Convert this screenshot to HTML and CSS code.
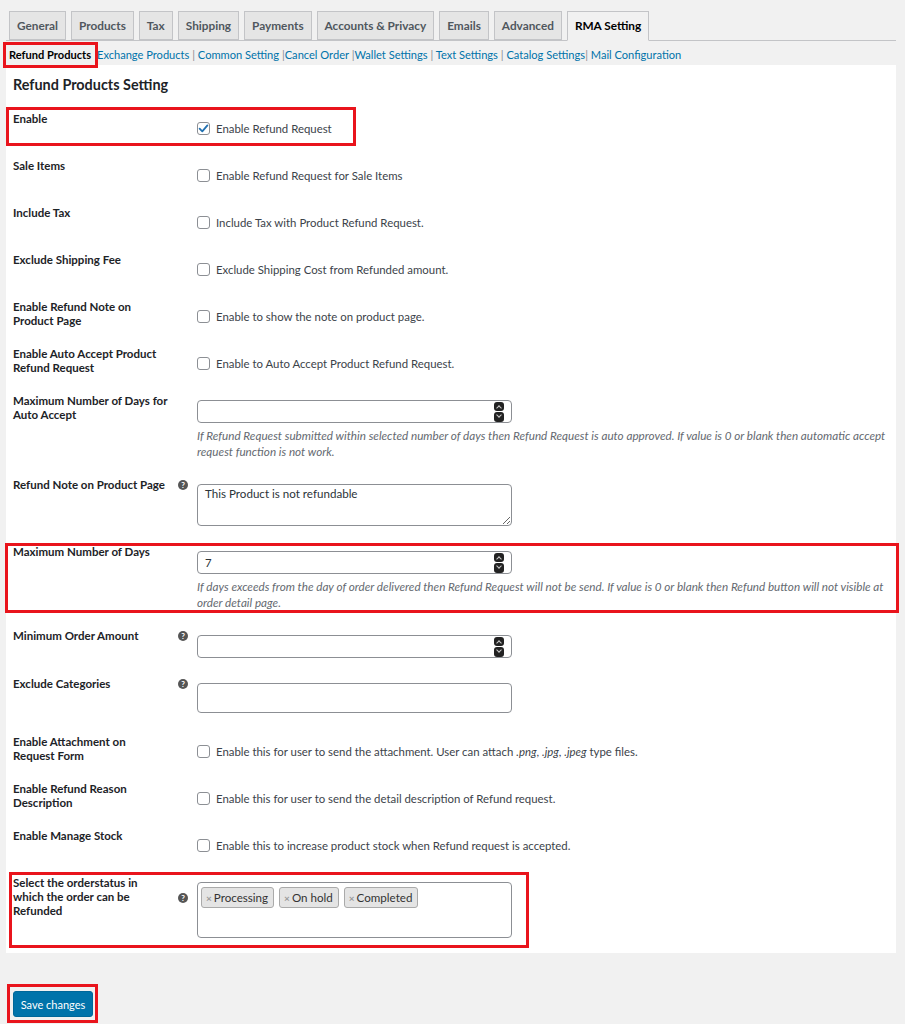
FILE: index.html
```html
<!DOCTYPE html>
<html lang="en">
<head>
  <meta charset="UTF-8" />
  <title>RMA Setting – Refund Products</title>
  <link rel="stylesheet" href="styles.css">
</head>
<body>
<div class="wrap">

  <!-- Tabs -->
  <nav class="nav-tabs">
    <a class="tab">General</a>
    <a class="tab">Products</a>
    <a class="tab">Tax</a>
    <a class="tab">Shipping</a>
    <a class="tab">Payments</a>
    <a class="tab">Accounts &amp; Privacy</a>
    <a class="tab">Emails</a>
    <a class="tab">Advanced</a>
    <a class="tab active">RMA Setting</a>
  </nav>

  <!-- Sub navigation -->
  <div class="subnav">
    <a class="current">Refund Products</a> <a>Exchange Products</a><span class="sep"> | </span><a>Common Setting</a><span class="sep"> |</span><a>Cancel Order</a><span class="sep"> |</span><a>Wallet Settings</a><span class="sep"> | </span><a>Text Settings</a><span class="sep"> | </span><a>Catalog Settings</a><span class="sep">| </span><a>Mail Configuration</a>
  </div>

  <!-- Settings panel -->
  <div class="panel">
    <h2>Refund Products Setting</h2>

    <div class="row">
      <div class="label">Enable</div><div class="help"></div>
      <div class="field"><label class="check"><span class="box checked"><svg viewBox="0 0 13 13" width="13" height="13"><path d="M2.6 6.6 L5.3 9.3 L10.4 3.4" fill="none" stroke="#2271b1" stroke-width="1.8" stroke-linecap="round" stroke-linejoin="round"/></svg></span>Enable Refund Request</label></div>
    </div>

    <div class="row">
      <div class="label">Sale Items</div><div class="help"></div>
      <div class="field"><label class="check"><span class="box"></span>Enable Refund Request for Sale Items</label></div>
    </div>

    <div class="row">
      <div class="label">Include Tax</div><div class="help"></div>
      <div class="field"><label class="check"><span class="box"></span>Include Tax with Product Refund Request.</label></div>
    </div>

    <div class="row">
      <div class="label">Exclude Shipping Fee</div><div class="help"></div>
      <div class="field"><label class="check"><span class="box"></span>Exclude Shipping Cost from Refunded amount.</label></div>
    </div>

    <div class="row">
      <div class="label">Enable Refund Note on Product Page</div><div class="help"></div>
      <div class="field"><label class="check"><span class="box"></span>Enable to show the note on product page.</label></div>
    </div>

    <div class="row">
      <div class="label">Enable Auto Accept Product Refund Request</div><div class="help"></div>
      <div class="field"><label class="check"><span class="box"></span>Enable to Auto Accept Product Refund Request.</label></div>
    </div>

    <div class="row">
      <div class="label">Maximum Number of Days for Auto Accept</div><div class="help"></div>
      <div class="field">
        <div class="input num"><span class="spin"><i></i><i class="down"></i></span></div>
        <p class="desc">If Refund Request submitted within selected number of days then Refund Request is auto approved. If value is 0 or blank then automatic accept request function is not work.</p>
      </div>
    </div>

    <div class="row">
      <div class="label">Refund Note on Product Page</div><div class="help"><span class="q">?</span></div>
      <div class="field"><textarea class="note">This Product is not refundable</textarea></div>
    </div>

    <div class="row">
      <div class="label">Maximum Number of Days</div><div class="help"></div>
      <div class="field">
        <div class="input num"><span class="val">7</span><span class="spin"><i></i><i class="down"></i></span></div>
        <p class="desc">If days exceeds from the day of order delivered then Refund Request will not be send. If value is 0 or blank then Refund button will not visible at order detail page.</p>
      </div>
    </div>

    <div class="row">
      <div class="label">Minimum Order Amount</div><div class="help"><span class="q">?</span></div>
      <div class="field"><div class="input num"><span class="spin"><i></i><i class="down"></i></span></div></div>
    </div>

    <div class="row">
      <div class="label">Exclude Categories</div><div class="help"><span class="q">?</span></div>
      <div class="field"><div class="input tall"></div></div>
    </div>

    <div class="row">
      <div class="label">Enable Attachment on Request Form</div><div class="help"></div>
      <div class="field"><label class="check"><span class="box"></span>Enable this for user to send the attachment. User can attach&nbsp;<em>.png</em>,&nbsp;<em>.jpg</em>,&nbsp;<em>.jpeg</em>&nbsp;type files.</label></div>
    </div>

    <div class="row">
      <div class="label">Enable Refund Reason Description</div><div class="help"></div>
      <div class="field"><label class="check"><span class="box"></span>Enable this for user to send the detail description of Refund request.</label></div>
    </div>

    <div class="row">
      <div class="label">Enable Manage Stock</div><div class="help"></div>
      <div class="field"><label class="check"><span class="box"></span>Enable this to increase product stock when Refund request is accepted.</label></div>
    </div>

    <div class="row last">
      <div class="label">Select the orderstatus in which the order can be Refunded</div><div class="help mid"><span class="q">?</span></div>
      <div class="field">
        <div class="select">
          <span class="tag"><b>×</b>Processing</span>
          <span class="tag"><b>×</b>On hold</span>
          <span class="tag"><b>×</b>Completed</span>
        </div>
      </div>
    </div>
  </div>

  <button class="save">Save changes</button>
</div>

<!-- annotation boxes -->
<div class="mark m1"></div>
<div class="mark m2"></div>
<div class="mark m3"></div>
<div class="mark m4"></div>
<div class="mark m5"></div>
</body>
</html>
```

FILE: styles.css
```css
* { margin: 0; padding: 0; box-sizing: border-box; }
body { font-family: Lato, "Liberation Sans", sans-serif; font-size: 11.4px; background: #f1f1f1; color: #3c434a; }
a { color: #0073aa; text-decoration: none; }

.wrap { padding: 11px 9px 0 6px; }

/* tabs */
.nav-tabs { display: flex; gap: 5px; padding-left: 3px; border-bottom: 1px solid #c3c4c7; height: 30px; }
.tab { height: 29px; line-height: 27px; padding: 0 7px; border: 1px solid #c3c4c7; background: #e5e5e5; color: #50575e; font-weight: bold; font-size: 11.8px; }
.tab.active { background: #f1f1f1; color: #000; height: 30px; border-bottom-color: #f1f1f1; }

/* sub navigation */
.subnav { height: 24px; line-height: 27px; padding-left: 3px; font-size: 11.1px; white-space: nowrap; }
.subnav .current { color: #000; font-weight: bold; margin-right: 3px; }
.subnav .sep { color: #8c8f94; }

/* panel */
.panel { background: #fff; padding: 12px 7px 0; }
.panel h2 { font-size: 14.4px; line-height: 16px; color: #1d2327; margin-bottom: 12px; }

.row { display: grid; grid-template-columns: 164px 20px 1fr; }
.label { padding-top: 7px; line-height: 14px; font-weight: bold; font-size: 11.5px; color: #1d2327; padding-right: 8px; }
.help { padding-top: 9px; }
.help.mid { padding-top: 24px; }
.q { display: block; width: 10px; height: 10px; margin-left: 1px; border-radius: 50%; background: #555; color: #fff; font-size: 8px; font-weight: bold; line-height: 10px; text-align: center; }
.field { padding: 13px 0 12px; }

.check { display: flex; align-items: center; height: 20px; margin-bottom: 2px; color: #3c434a; }
.check em { font-style: italic; }
.box { width: 13px; height: 13px; border: 1px solid #8c8f94; border-radius: 3px; background: #fff; margin-right: 6px; flex: none; position: relative; }
.box svg { position: absolute; left: -1px; top: -1px; }

.input { width: 315px; height: 23px; border: 1px solid #8c8f94; border-radius: 4px; background: #fff; }
.input.tall { height: 30px; margin-bottom: 3px; }
.num { display: flex; align-items: center; justify-content: space-between; padding: 0 7px 0 7px; }
.val { color: #2c3338; }
.spin { margin-left: auto; width: 10px; height: 20px; display: flex; flex-direction: column; gap: 1px; }
.spin i { flex: 1; background: #222; border-radius: 3px; position: relative; }
.spin i::after { content: ""; position: absolute; left: 3px; top: 4px; width: 3px; height: 3px; border-left: 1px solid #ccc; border-top: 1px solid #ccc; transform: rotate(45deg); }
.spin i.down::after { top: 1px; transform: rotate(225deg); }

.desc { margin-top: 4px; line-height: 16px; font-style: italic; color: #646970; font-size: 11.7px; }

.note { display: block; width: 315px; height: 42px; border: 1px solid #8c8f94; border-radius: 4px; padding: 2px 7px; font-family: Lato, "Liberation Sans", sans-serif; font-size: 11.6px; color: #2c3338; }

.select { width: 315px; height: 56px; border: 1px solid #8c8f94; border-radius: 4px; padding: 4px 3px; display: flex; align-items: flex-start; gap: 5px; }
.tag { height: 21px; line-height: 19px; padding: 0 5px 0 4px; background: #e4e4e4; border: 1px solid #aaa; border-radius: 3px; color: #333; font-size: 11.6px; }
.tag b { color: #999; font-weight: bold; margin-right: 2px; font-size: 10px; }
.row.last .field { padding-bottom: 15px; }

.save { margin: 38px 0 0 7px; width: 80px; height: 26px; background: #0073aa; border: 1px solid #006799; border-radius: 3px; color: #fff; font-family: Lato, "Liberation Sans", sans-serif; font-size: 11px; }

/* red annotation boxes */
.mark { position: absolute; border: 3px solid #e9141c; }
.m1 { left: 3px; top: 42px; width: 95px; height: 26px; }
.m2 { left: 6px; top: 107px; width: 350px; height: 39px; }
.m3 { left: 5px; top: 543px; width: 894px; height: 70px; }
.m4 { left: 9px; top: 872px; width: 520px; height: 76px; }
.m5 { left: 7px; top: 984px; width: 91px; height: 39px; }
```
